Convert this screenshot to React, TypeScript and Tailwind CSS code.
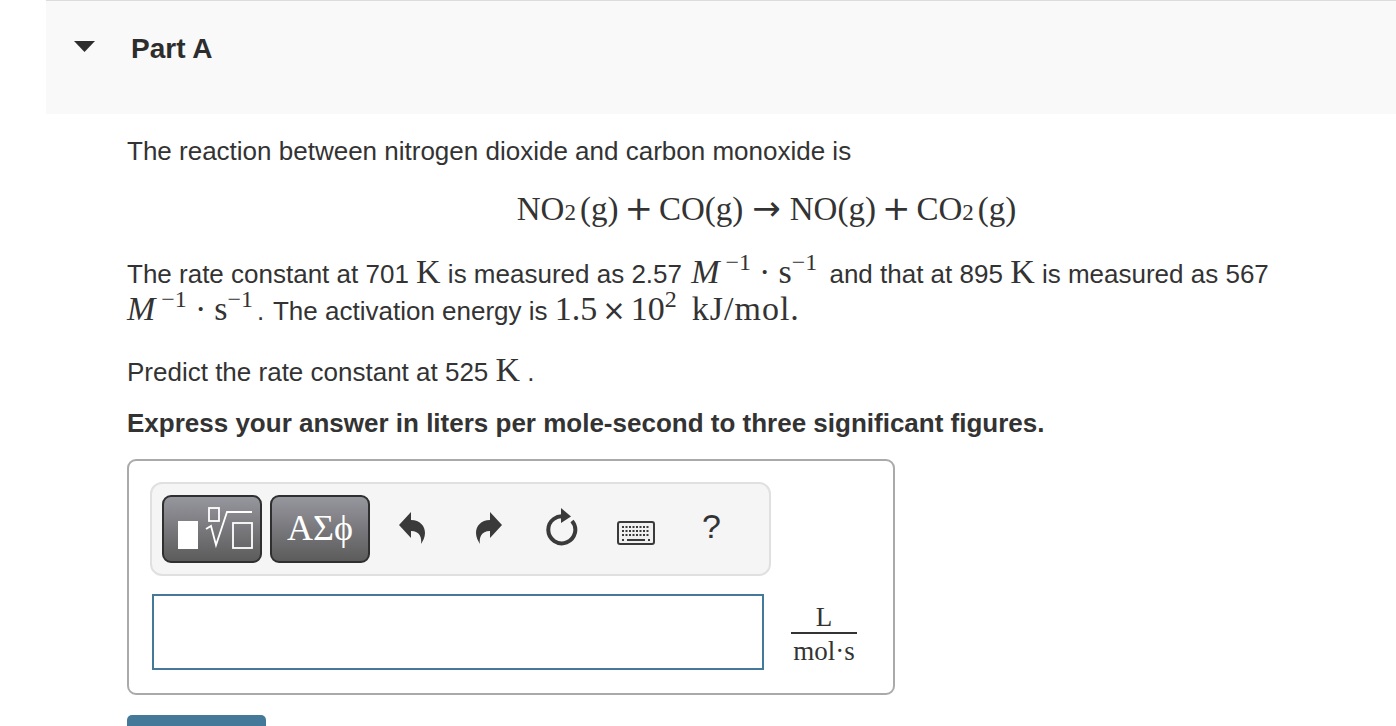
import React from "react";

const serif = "font-['Liberation_Serif',serif]";
const math = "font-['Liberation_Serif',serif] text-[34px] leading-none";
const sym = "font-['DejaVu_Sans',sans-serif] text-[28px] leading-none";
const symEq = "font-['DejaVu_Sans',sans-serif] text-[34px] leading-none";

function Sup({ children }: { children: React.ReactNode }) {
  return <span className="relative top-[-13px] text-[24px] leading-none">{children}</span>;
}

function Undo({ flip }: { flip?: boolean }) {
  return (
    <svg width="28" height="33" viewBox="0 0 28 33" className={flip ? "-scale-x-100" : ""}>
      <path d="M1 14 L13 1 V9 C22 9 27 15 27 22 C27 26 25 30 23 33 C24 27 22 20 13 20 V27 Z" fill="#3a3a3a" />
    </svg>
  );
}

function Unit() {
  return (
    <span className={math}>
      <i>M</i>
      <span className="ml-[6px]"><Sup>−1</Sup></span>
      <span className="mx-[8px]">·</span>s<Sup>−1</Sup>
    </span>
  );
}

export default function App() {
  return (
    <div className="w-[1396px] h-[726px] overflow-hidden bg-white text-[#333] font-['Liberation_Sans',sans-serif]">
      <div className="ml-[46px] h-[114px] bg-[#f9f9f9] border-t border-[#dcdcdc] flex items-start pt-[30px] pl-[28px]">
        <svg width="21" height="11" viewBox="0 0 21 11" className="mt-[10px]">
          <path d="M0 0 H21 L10.5 11 Z" fill="#2d2d2d" />
        </svg>
        <div className="ml-[36px] text-[28px] leading-[36px] font-bold text-[#2d2d2d]">Part A</div>
      </div>

      <div className="pl-[127px] w-[1396px]">
        <p className="mt-[19px] text-[26px] leading-[36px] whitespace-nowrap">The reaction between nitrogen dioxide and carbon monoxide is</p>
        <div className={`mt-[20px] w-[1279px] text-center text-[33px] leading-[40px] whitespace-nowrap ${serif}`}>
          NO<span className="text-[23px]">2</span><span className="ml-[4px]">(g)</span>
          <span className={`${symEq} mx-[6px]`}>+</span>CO(g)
          <span className={`${symEq} mx-[9px]`}>→</span>NO(g)
          <span className={`${symEq} mx-[6px]`}>+</span>CO<span className="text-[23px]">2</span><span className="ml-[4px]">(g)</span>
        </div>
        <p className="mt-[22px] text-[26px] leading-[36px] whitespace-nowrap">
          The rate constant at 701 <span className={math}>K</span> is measured as 2.57 <span className="ml-[2px]"><Unit /></span>
          <span className="ml-[5px]"> and that at 895 </span>
          <span className={math}>K</span> is measured as 567
          <br />
          <Unit /><span className="ml-[4px]">.</span><span className="ml-[2px]"> The activation energy is </span>
          <span className={math}>
            1.5<span className={`${sym} mx-[5px]`}>×</span>10<Sup>2</Sup>
            <span className="ml-[15px] tracking-[1px]">kJ/mol.</span>
          </span>
        </p>
        <p className="mt-[24px] text-[26px] leading-[37px] whitespace-nowrap">
          Predict the rate constant at 525 <span className={math}>K</span> .
        </p>
        <p className="mt-[14px] text-[26px] leading-[37px] font-bold whitespace-nowrap">Express your answer in liters per mole-second to three significant figures.</p>

        <div className="mt-[17px] w-[768px] h-[236px] border-2 border-[#aaaaaa] rounded-[9px] pt-[21px] pl-[21px]">
          <div className="w-[621px] h-[94px] bg-[#f5f5f5] border-2 border-[#e0e0e0] rounded-[12px] flex items-center pl-[10px]">
            <div className="w-[100px] h-[68px] rounded-[9px] border-2 border-[#2f2f2f] bg-gradient-to-b from-[#96969e] to-[#5c5c5c]">
              <svg width="96" height="64" viewBox="0 0 96 64">
                <rect x="14" y="24" width="20" height="28" fill="#fff" />
                <g fill="none" stroke="#fff" strokeWidth="1.8">
                  <rect x="45" y="11" width="10" height="13" />
                  <rect x="69" y="26" width="19" height="25" />
                  <path d="M42 32 L47 29 L52 48 L63 15 H88" />
                </g>
              </svg>
            </div>
            <div className={`ml-[8px] w-[100px] h-[68px] pb-[3px] rounded-[9px] border-2 border-[#2f2f2f] bg-gradient-to-b from-[#96969e] to-[#5c5c5c] flex items-center justify-center text-white text-[36px] leading-none ${serif}`}>
              ΑΣϕ
            </div>
            <div className="ml-[28px] mb-[4px] w-[28px] flex"><Undo /></div>
            <div className="ml-[49px] mb-[4px] w-[28px] flex"><Undo flip /></div>
            <svg width="32" height="38" viewBox="0 0 32 38" className="ml-[43px] mb-[4px]">
              <path d="M20 9 A13.5 13.5 0 1 0 26 13" fill="none" stroke="#3a3a3a" strokeWidth="4" />
              <path d="M15 0 L25 8.5 L15 15 Z" fill="#3a3a3a" />
            </svg>
            <svg width="38" height="24" viewBox="0 0 38 24" className="ml-[39px] mt-[8px]">
              <rect x="1" y="1" width="36" height="22" rx="2" fill="#f0f0f0" stroke="#3a3a3a" strokeWidth="2" />
              <path d="M5 6 H33 M5 10 H33 M5 14 H33" stroke="#3a3a3a" strokeWidth="2" strokeDasharray="2 1.5" />
              <path d="M10 19 H28" stroke="#3a3a3a" strokeWidth="2" />
              <path d="M5 19 H7 M31 19 H33" stroke="#3a3a3a" strokeWidth="2" />
            </svg>
            <div className="ml-[47px] mb-[6px] text-[34px] leading-none text-[#333]">?</div>
          </div>
          <div className="mt-[18px] flex items-center">
            <input aria-label="answer" className="ml-[2px] w-[612px] h-[76px] border-2 border-[#44799a] bg-white" />
            <div className={`ml-[27px] w-[66px] flex flex-col items-center text-[27px] ${serif}`}>
              <div className="w-full border-b-2 border-[#333] text-center h-[38px] pt-[5px] leading-[32px]">L</div>
              <div className="leading-[34px] whitespace-nowrap">mol·s</div>
            </div>
          </div>
        </div>
        <div className="mt-[20px] w-[139px] h-[40px] bg-[#44799a] rounded-t-[5px]" />
      </div>
    </div>
  );
}
